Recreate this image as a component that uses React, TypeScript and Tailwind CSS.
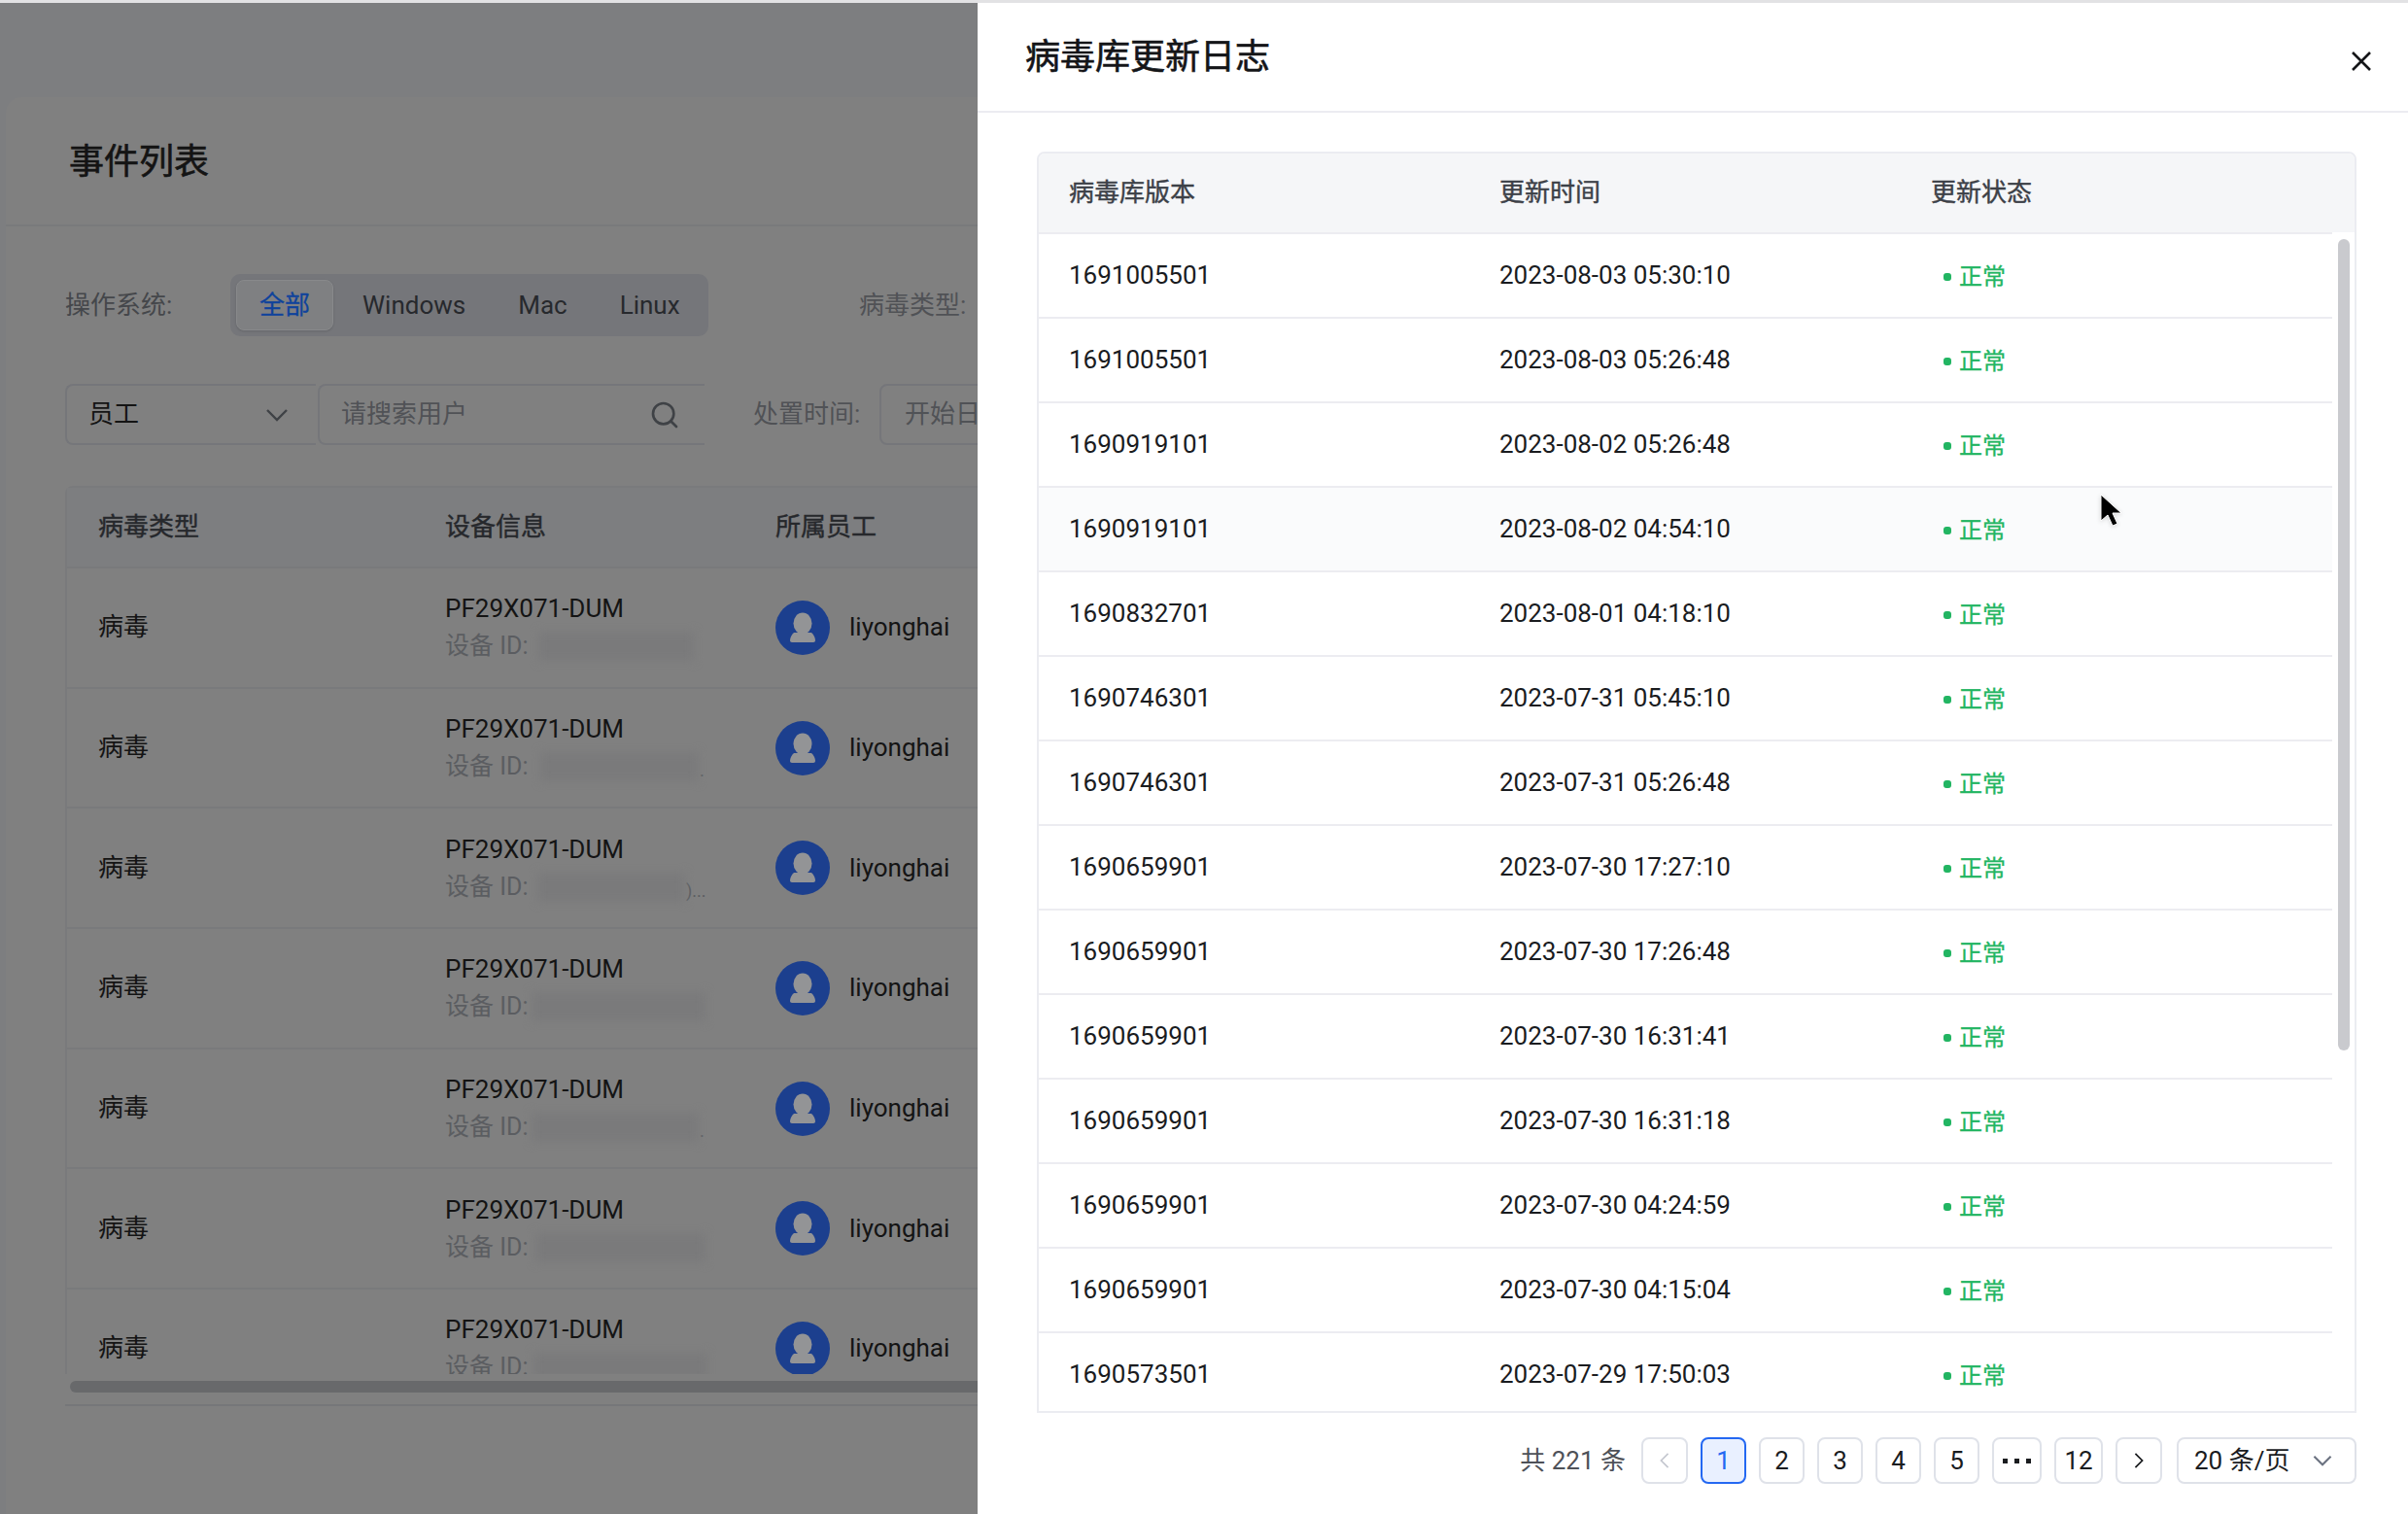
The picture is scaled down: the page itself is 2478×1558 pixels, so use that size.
import React from "react";
import { Search } from "lucide-react";

const logRows = [
  ["1691005501", "2023-08-03 05:30:10"],
  ["1691005501", "2023-08-03 05:26:48"],
  ["1690919101", "2023-08-02 05:26:48"],
  ["1690919101", "2023-08-02 04:54:10"],
  ["1690832701", "2023-08-01 04:18:10"],
  ["1690746301", "2023-07-31 05:45:10"],
  ["1690746301", "2023-07-31 05:26:48"],
  ["1690659901", "2023-07-30 17:27:10"],
  ["1690659901", "2023-07-30 17:26:48"],
  ["1690659901", "2023-07-30 16:31:41"],
  ["1690659901", "2023-07-30 16:31:18"],
  ["1690659901", "2023-07-30 04:24:59"],
  ["1690659901", "2023-07-30 04:15:04"],
  ["1690573501", "2023-07-29 17:50:03"],
];

const eventRows = [
  { ml: 10, w: 160, tail: "" },
  { ml: 12, w: 163, tail: "." },
  { ml: 9, w: 152, tail: ")..." },
  { ml: 3, w: 179, tail: "" },
  { ml: 3, w: 172, tail: "." },
  { ml: 7, w: 175, tail: "" },
  { ml: 5, w: 179, tail: "" },
];

function Chevron({ className }: { className: string }) {
  return (
    <svg viewBox="0 0 24 14" className={className} fill="none" stroke="currentColor" strokeWidth="2.4">
      <path d="M2 2l10 10L22 2" />
    </svg>
  );
}

function Avatar() {
  return (
    <svg viewBox="0 0 56 56" className="w-[56px] h-[56px] shrink-0">
      <circle cx="28" cy="28" r="28" fill="#1c3f8e" />
      <ellipse cx="28" cy="23.5" rx="9.5" ry="11" fill="#939496" />
      <path d="M19 33C17 34.5 15 38 15 41c0 1.2.8 2 2 2h22c1.200 0 2-.8 2-2 0-3-2-6.500-4-8z" fill="#939496" />
    </svg>
  );
}

function PageButton({ children, className = "" }: { children: React.ReactNode; className?: string }) {
  return (
    <div className={`h-[48px] flex items-center justify-center rounded-[8px] border-2 border-[#dfe2e9] text-[#1a1c1f] ${className}`}>
      {children}
    </div>
  );
}

function EventList() {
  return (
    <div className="w-[1006px] shrink-0 overflow-hidden pt-[97px] pl-[6px] bg-[#7d7e80]">
      <div className="w-[1500px] h-[1458px] rounded-tl-[16px] bg-[#808080] text-[#141414]">
        <div className="h-[133px] border-b-2 border-[#797a7c] pl-[65px] flex items-center">
          <h1 className="text-[36px] leading-none mt-[2px] [-webkit-text-stroke:0.6px_#141414]">事件列表</h1>
        </div>

        <div className="pl-[61px]">
          <div className="mt-[49px] h-[64px] flex items-center">
            <div className="w-[170px] text-[#45474b]">操作系统:</div>
            <div className="w-[492px] h-[64px] rounded-[10px] bg-[#75767a] p-[6px] flex items-center text-[#27292d] whitespace-nowrap">
              <div className="w-[100px] h-[52px] shrink-0 rounded-[8px] bg-[#7f8082] border border-[#88898b] shadow-sm flex items-center justify-center text-[#0f439c] [-webkit-text-stroke:0.3px_#0f439c]">全部</div>
              <div className="ml-[3px] px-[27px]">Windows</div>
              <div className="px-[27px]">Mac</div>
              <div className="pl-[27px]">Linux</div>
            </div>
            <div className="ml-[155px] text-[#505256]">病毒类型:</div>
          </div>

          <div className="mt-[49px] h-[63px] flex items-center">
            <div className="w-[258px] h-[63px] rounded-l-[8px] border-2 border-r-0 border-[#75767a] pl-[22px] pr-[28px] flex items-center justify-between">
              <span>员工</span>
              <Chevron className="w-[24px] h-[14px] text-[#3f4246]" />
            </div>
            <div className="ml-[2px] w-[398px] h-[63px] rounded-l-[8px] border-2 border-r-0 border-[#75767a] pl-[22px] pr-[25px] flex items-center justify-between text-[#505256]">
              <span>请搜索用户</span>
              <Search size={32} strokeWidth={2} className="text-[#3f4246]" />
            </div>
            <div className="ml-[50px] w-[130px] text-[#505256]">处置时间:</div>
            <div className="w-[300px] h-[63px] rounded-l-[8px] border-2 border-[#75767a] pl-[24px] flex items-center text-[#505256]">开始日期</div>
          </div>

          <div className="mt-[42px] w-[1400px] rounded-tl-[8px] border-l-2 border-t-2 border-[#797a7c]">
            <div className="h-[83px] bg-[#7d7e80] border-b-2 border-[#797a7c] flex items-center text-[#26282c] [-webkit-text-stroke:0.4px_#26282c]">
              <div className="w-[355px] pl-[32px]">病毒类型</div>
              <div className="w-[340px] pl-[34px]">设备信息</div>
              <div className="pl-[34px]">所属员工</div>
            </div>
            <div className="h-[829px] overflow-hidden">
              {eventRows.map((r, i) => (
                <div key={i} className="h-[123.7px] border-b-2 border-[#797a7c] flex items-center">
                  <div className="w-[355px] pl-[32px]">病毒</div>
                  <div className="w-[340px] pl-[34px]">
                    <div className="leading-[40px]">PF29X071-DUM</div>
                    <div className="leading-[40px] -mt-[1px] flex items-center text-[#5b5d61] text-[25px] whitespace-nowrap">
                      <span className="w-[86px] shrink-0">设备 ID:</span>
                      <span className="h-[30px] bg-[#7a7a7b] blur-[5px] shrink-0" style={{ marginLeft: r.ml, width: r.w }} />
                      <span className="ml-[1px] text-[18px] leading-none pt-[8px]">{r.tail}</span>
                    </div>
                  </div>
                  <div className="pl-[34px] flex items-center">
                    <Avatar />
                    <span className="ml-[20px]">liyonghai</span>
                  </div>
                </div>
              ))}
            </div>
          </div>
          <div className="w-[1400px] h-[24px] pt-[7px] pl-[5px] border-b-2 border-[#767779] box-content">
            <div className="h-[12px] rounded-full bg-[#68696b]" />
          </div>
        </div>
      </div>
    </div>
  );
}

function Drawer() {
  return (
    <div className="flex-1 bg-white flex flex-col">
      <div className="h-[113px] border-b-2 border-[#ececf1] pl-[49px] pr-[37px] flex items-center justify-between shrink-0">
        <h2 className="text-[36px] leading-none text-[#141518] [-webkit-text-stroke:0.6px_#141518]">病毒库更新日志</h2>
        <svg viewBox="0 0 22 22" className="w-[22px] h-[22px] mt-[8px]" fill="none" stroke="#141518" strokeWidth="2.6">
          <path d="M2 2l18 18M20 2L2 20" />
        </svg>
      </div>

      <div className="mt-[40px] ml-[61px] w-[1358px] h-[1298px] shrink-0 rounded-t-[8px] border-2 border-[#ebecf1] overflow-hidden flex flex-col">
        <div className="h-[81px] shrink-0 bg-[#f5f6f8] flex items-center text-[#3c4047] [-webkit-text-stroke:0.4px_#3c4047]">
          <div className="w-[443px] pl-[31px]">病毒库版本</div>
          <div className="w-[444px] pl-[31px]">更新时间</div>
          <div className="pl-[31px]">更新状态</div>
        </div>
        <div className="flex flex-1 min-h-0">
          <div className="w-[1331px] shrink-0 border-t-2 border-[#ececf1] text-[#1a1c1f]">
            {logRows.map((r, i) => (
              <div key={i} className={`h-[87px] border-b-2 border-[#ececf1] flex items-center ${i === 3 ? "bg-[#fafbfc]" : ""}`}>
                <div className="w-[443px] pl-[31px]">{r[0]}</div>
                <div className="w-[444px] pl-[31px]">{r[1]}</div>
                <div className="pl-[44px] flex items-center mt-[2px] text-[#22b562] text-[24px] [-webkit-text-stroke:0.3px_#22b562]">
                  <span className="w-[8px] h-[8px] rounded-[3px] bg-[#22b562] mr-[8px]" />
                  正常
                </div>
              </div>
            ))}
          </div>
          <div className="flex-1 pt-[7px] pl-[6px]">
            <div className="w-[12px] h-[835px] rounded-full bg-[#c9cace]" />
          </div>
        </div>
      </div>

      <div className="mt-[25px] pr-[53px] flex items-center justify-end gap-[13px]">
        <span className="text-[#4e5158] mr-[3px]">共 221 条</span>
        <PageButton className="w-[48px]"><Chevron className="w-[18px] h-[10px] rotate-90 text-[#c5c8d0]" /></PageButton>
        <PageButton className="w-[47px] !border-[#2468f2] bg-[#e9f0ff] !text-[#2468f2]">1</PageButton>
        <PageButton className="w-[47px]">2</PageButton>
        <PageButton className="w-[47px]">3</PageButton>
        <PageButton className="w-[47px]">4</PageButton>
        <PageButton className="w-[47px]">5</PageButton>
        <PageButton className="w-[51px] gap-[7px]">
          <span className="w-[5px] h-[5px] bg-[#1a1c1f]" />
          <span className="w-[5px] h-[5px] bg-[#1a1c1f]" />
          <span className="w-[5px] h-[5px] bg-[#1a1c1f]" />
        </PageButton>
        <PageButton className="w-[50px]">12</PageButton>
        <PageButton className="w-[48px]"><Chevron className="w-[18px] h-[10px] -rotate-90 text-[#1a1c1f]" /></PageButton>
        <PageButton className="w-[185px] ml-[2px] pl-[16px] pr-[22px] !justify-between">
          <span>20 条/页</span>
          <Chevron className="w-[22px] h-[12px] text-[#6b7280]" />
        </PageButton>
      </div>
    </div>
  );
}

export default function App() {
  return (
    <div className="relative w-[2478px] h-[1558px] overflow-hidden flex flex-col text-[26px] font-[Roboto,Noto_Sans_CJK_SC,sans-serif]">
      <div className="h-[3px] shrink-0 bg-[#e2e2e4]" />
      <div className="flex flex-1 min-h-0">
        <EventList />
        <Drawer />
      </div>
      <svg viewBox="0 0 24 38" className="absolute left-[2160px] top-[507px] w-[24px] h-[38px] drop-shadow-sm">
        <path d="M2 2v27l7-6 5 11 5-2-5-11h9z" fill="#000" stroke="#fff" strokeWidth="1" />
      </svg>
    </div>
  );
}
